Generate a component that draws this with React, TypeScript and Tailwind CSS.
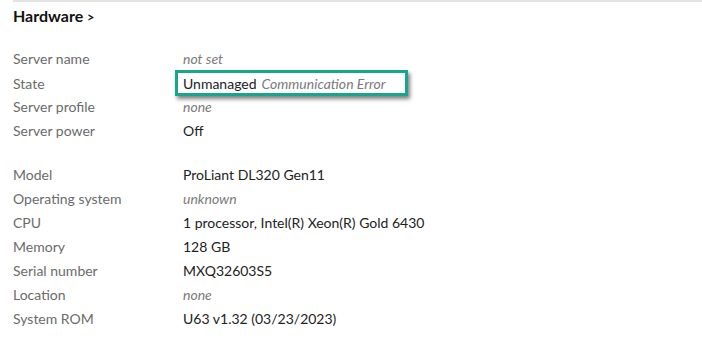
import React from 'react';

interface Row {
  label: string;
  value: string;
  muted?: boolean;
}

const stateRows: Row[] = [
  { label: 'Server name', value: 'not set', muted: true },
  { label: 'State', value: 'Unmanaged' },
  { label: 'Server profile', value: 'none', muted: true },
  { label: 'Server power', value: 'Off' },
];

const infoRows: Row[] = [
  { label: 'Model', value: 'ProLiant DL320 Gen11' },
  { label: 'Operating system', value: 'unknown', muted: true },
  { label: 'CPU', value: '1 processor, Intel(R) Xeon(R) Gold 6430' },
  { label: 'Memory', value: '128 GB' },
  { label: 'Serial number', value: 'MXQ32603S5' },
  { label: 'Location', value: 'none', muted: true },
  { label: 'System ROM', value: 'U63 v1.32 (03/23/2023)' },
];

function DetailRow({ row }: { row: Row }) {
  return (
    <div className="grid grid-cols-[170px_1fr] h-6 items-center">
      <span className="text-[#6b6b6b]">{row.label}</span>
      {row.label === 'State' ? (
        <span className="ml-[-8px] w-[233px] h-[26px] flex items-center pl-[5px] border-[3px] border-[#17a58c] shadow-[2px_3px_4px_rgba(0,0,0,0.5)] whitespace-nowrap">
          <span className="text-[#222]">Unmanaged</span>
          <span className="ml-[5px] italic text-[#7a7a7a]">Communication Error</span>
        </span>
      ) : (
        <span className={row.muted ? 'italic text-[#7a7a7a]' : 'text-[#222]'}>{row.value}</span>
      )}
    </div>
  );
}

export default function App() {
  return (
    <div className="w-[702px] h-[343px] bg-white overflow-hidden font-['Lato','Open_Sans',sans-serif] text-[14px]">
      <div className="ml-[13px] h-[2px] bg-[#e4e4e4]" />
      <div className="pl-[13px] pt-[5px]">
        <h2 className="text-[16px] font-bold text-[#111] h-[18px] leading-[18px]">
          Hardware <span className="text-[13px]">&gt;</span>
        </h2>
        <div className="mt-[21px]">
          {stateRows.map((r) => (
            <DetailRow key={r.label} row={r} />
          ))}
        </div>
        <div className="mt-[20px]">
          {infoRows.map((r) => (
            <DetailRow key={r.label} row={r} />
          ))}
        </div>
      </div>
    </div>
  );
}
